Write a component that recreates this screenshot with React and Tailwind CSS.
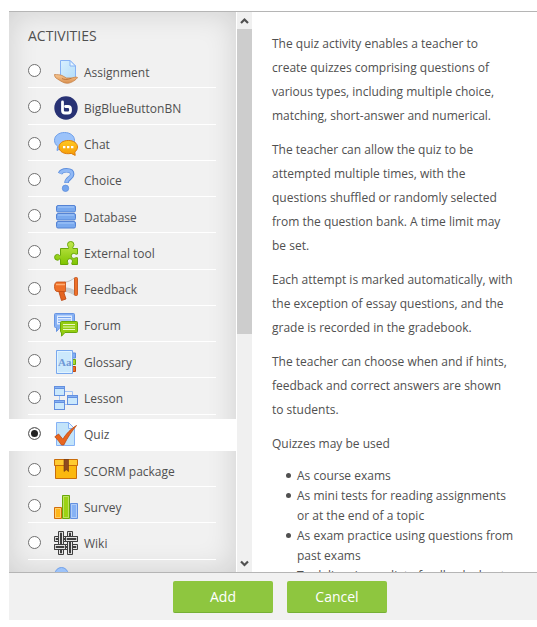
import { useState } from 'react';

const Svg = ({ children }) => (
  <svg width="24" height="24" viewBox="0 0 24 24" aria-hidden="true" className="shrink-0">
    {children}
  </svg>
);

const AssignmentIcon = () => (
  <Svg>
    <defs>
      <linearGradient id="paper" x1="0" y1="0" x2="1" y2="1">
        <stop offset="0" stopColor="#d8f0ff" />
        <stop offset="1" stopColor="#b4ddf8" />
      </linearGradient>
      <linearGradient id="hand" x1="0" y1="0" x2="0" y2="1">
        <stop offset="0" stopColor="#f8c894" />
        <stop offset="1" stopColor="#d98f4e" />
      </linearGradient>
    </defs>
    <path d="M6.5 .5h9.500l5.500 5.500v12.500h-15z" fill="url(#paper)" stroke="#86b2f5" />
    <path d="M16 .5v5.500h5.500z" fill="#e8f6ff" stroke="#86b2f5" />
    <path d="M.5 14.500c2 .3 5.500 0 7.500 1l4.500 2.500h5c2-.3 4.500-1.500 6-.5-1 2-6 5.500-10 5.800-4 0-7-2.500-10-4.300-2-1-3-2.500-3-4.500z" fill="url(#hand)" stroke="#c68146" strokeWidth=".8" />
    <path d="M8 18.500c2 1.200 5 1.500 9.500-.3" fill="none" stroke="#b97339" strokeWidth=".9" />
  </Svg>
);

const BigBlueButtonIcon = () => (
  <Svg>
    <circle cx="12" cy="12" r="11.700" fill="#283274" />
    <path d="M8.500 6v8.500a2.500 2.500 0 0 0 2.500 2.500h3a2.500 2.500 0 0 0 2.500-2.500v-1.500a2.500 2.500 0 0 0-2.500-2.500h-2.500" fill="none" stroke="#fff" strokeWidth="2.800" strokeLinecap="round" strokeLinejoin="round" />
  </Svg>
);

const ChatIcon = () => (
  <Svg>
    <defs>
      <linearGradient id="orange" x1="0" y1="0" x2="0" y2="1">
        <stop offset="0" stopColor="#ffc922" />
        <stop offset="1" stopColor="#f59a07" />
      </linearGradient>
    </defs>
    <path d="M10.500.5c5.800 0 10 3.300 10 7.800s-4 8-10 8c-1 0-2-.1-3-.3L3 18.500l.7-4.200C1.700 12.800.5 10.700.5 8.300.5 3.800 4.700.5 10.500.5z" fill="#9cc3fa" stroke="#6f9fe9" />
    <path d="M14.500 8.500c5 0 9 2.700 9 6.500 0 2-1 3.700-2.700 4.900l.4 3.500-4-2c-7 1.300-12.200-1.700-12.200-6.400 0-3.800 4-6.500 9.500-6.500z" fill="url(#orange)" stroke="#dd7d0b" />
    <path d="M9 14h2.400v2.200H9zM13 14h2.400v2.200H13zM17 14h2.400v2.200H17z" fill="#fff" />
  </Svg>
);

const ChoiceIcon = () => (
  <Svg>
    <path d="M6 5.600C7.200 3 9.500 2.300 12.500 2.300c3.500 0 5.700 1.300 5.700 4 0 4-5.700 3.800-5.700 8.700" fill="none" stroke="#5d8edd" strokeWidth="4.500" />
    <path d="M6.200 5.500C7.500 3 9.500 2.500 12.500 2.500c3.200 0 5.500 1.200 5.500 3.700 0 3.600-5.500 3.800-5.500 8.400" fill="none" stroke="#91b9f5" strokeWidth="2.800" />
    <circle cx="11.500" cy="20.300" r="3.200" fill="#74a5ee" stroke="#5d8edd" strokeWidth=".8" />
  </Svg>
);

const DatabaseIcon = () => (
  <Svg>
    {[0.5, 8.5, 16.5].map((y) => (
      <g key={y}>
        <rect x="2.500" y={y} width="19" height="6.500" rx="1.500" fill="#79a9ee" stroke="#5583d4" />
        <path d={`M4 ${y + 1.5}h16`} stroke="#a9cbfb" />
      </g>
    ))}
  </Svg>
);

const PuzzleIcon = () => (
  <Svg>
    <defs>
      <linearGradient id="green" x1="0" y1="0" x2="0" y2="1">
        <stop offset="0" stopColor="#c3e84f" />
        <stop offset="1" stopColor="#7fc400" />
      </linearGradient>
    </defs>
    <path d="M6.500 7.500H14.500c.8-1.200-1-2-1-4a3.200 3 0 0 1 6.400 0c0 2-1.800 2.800-1 4h4.600v5.500c-1.500.8-2.300-.6-3.800-.6a2.500 2.500 0 0 0 0 5c1.500 0 2.300-1.400 3.800-.6v6.700h-5.500c-.8-1.500.5-2 .5-3.500a2.600 2.300 0 0 0-5.200 0c0 1.500 1.300 2 .5 3.500H6.500v-5.300c-1.200-.7-1.500 1-3 1a2.900 2.900 0 0 1 0-5.800c1.500 0 1.800 1.700 3 1z" fill="url(#green)" stroke="#69a70a" />
  </Svg>
);

const FeedbackIcon = () => (
  <Svg>
    <path d="M4.500 13.500h6.500l-1 2.500 2 6-4.500 1.500z" fill="#e56420" stroke="#b94410" strokeWidth=".8" />
    <path d="M10 5.300C14.500 5 18 3 20.500.8v17.400c-2.500-2-6-3.900-10.500-3.900z" fill="#f2f2f2" stroke="#b3b3b3" strokeWidth=".8" />
    <path d="M12 10.500c3.500 0 6 1 8 2.500v4.500c-2.500-2-5-3-8-3.500z" fill="#c9c9c9" />
    <path d="M3 5h8.500v9.500H3C1.300 14.500.5 12 .5 9.700S1.300 5 3 5z" fill="#ee7029" stroke="#c14b12" strokeWidth=".8" />
    <path d="M2 7.500h9" stroke="#ffad73" strokeWidth="1.500" />
    <rect x="20.500" y=".5" width="3" height="18" rx="1" fill="#ee7029" stroke="#c14b12" strokeWidth=".8" />
  </Svg>
);

const ForumIcon = () => (
  <Svg>
    <path d="M1.500.5h18a1 1 0 0 1 1 1v12a1 1 0 0 1-1 1H6L2.500 18.500v-4h-1a1 1 0 0 1-1-1v-12a1 1 0 0 1 1-1z" fill="#86b0f3" stroke="#6794e2" />
    <path d="M3 2.500h15v9H3z" fill="#dfecff" />
    <path d="M4 4.500h13M4 7h13M4 9.500h13" stroke="#76a3ec" />
    <path d="M7.500 8.500h15a1 1 0 0 1 1 1v9a1 1 0 0 1-1 1H11L7.500 23.200v-3.700h0a1 1 0 0 1-1-1v-9a1 1 0 0 1 1-1z" fill="#93cc11" stroke="#69a70a" />
    <path d="M9 11.500h12M9 14h12M9 16.500h12" stroke="#e9f9bd" strokeWidth="1.200" />
  </Svg>
);

const GlossaryIcon = () => (
  <Svg>
    <path d="M18 3h3.500v5H18z" fill="#82b0f4" stroke="#5f8ede" />
    <path d="M18 9.500h3.500v5H18z" fill="#a9d92e" stroke="#69a70a" />
    <path d="M18 16.500h3.500v5H18z" fill="#ed6c24" stroke="#bd4911" />
    <path d="M2.500.5h16v23h-16z" fill="#cbe8fc" stroke="#79a8ee" />
    <path d="M3.500 1.500h14v21h-14z" fill="none" stroke="#e2f4ff" />
    <text x="4" y="16" fontSize="11" fontWeight="bold" fill="#6e98d5" fontFamily="Liberation Serif, serif">Aa</text>
  </Svg>
);

const LessonIcon = () => (
  <Svg>
    <path d="M11 5.500h7.500V9M5.500 10v4.500M11 18.500h7.500V17" fill="none" stroke="#a3c3f5" />
    {[[0.5, 0.5], [13.5, 9.5], [0.5, 14.5]].map(([x, y]) => (
      <g key={`${x}-${y}`}>
        <rect x={x} y={y} width="10" height="9" fill="#cbe8fc" stroke="#6490df" />
        <rect x={x} y={y} width="10" height="2" fill="#86b2f5" stroke="#6490df" />
      </g>
    ))}
  </Svg>
);

const QuizIcon = () => (
  <Svg>
    <path d="M2.500.5h12l6 6v17h-18z" fill="#c3e4fa" stroke="#86b2f5" />
    <path d="M14.500.5v6h6z" fill="#e8f6ff" stroke="#86b2f5" />
    <path d="M.8 14.800 4.600 12l4.200 5.200C12 12 17 6.500 22.500 3.500 18 9 13.500 15.500 9.800 23H7.500C5.500 20 3.500 17.500.8 14.800z" fill="#e9661f" stroke="#bd4911" strokeWidth=".8" />
  </Svg>
);

const ScormIcon = () => (
  <Svg>
    <path d="M1.500 6.500h21v13h-21z" fill="#fbb80f" stroke="#c96d0b" />
    <path d="M.5.500h23v6H.5z" fill="#ffcb31" stroke="#c96d0b" />
    <path d="M10 .5h4.500v12l-2.200-1.800-2.300 1.800z" fill="#8f4a1f" stroke="#6d3513" strokeWidth=".6" />
  </Svg>
);

const SurveyIcon = () => (
  <Svg>
    <path d="M.5 12.500h7v11h-7z" fill="#ffb61a" stroke="#d26c0b" />
    <path d="M8.500.5h7v23h-7z" fill="#9cd313" stroke="#69a70a" />
    <path d="M16.500 8.500h7v15h-7z" fill="#86b2f5" stroke="#6490df" />
    <path d="M1.500 13.500h5v9h-5zM9.500 1.500h5v21h-5zM17.500 9.500h5v13h-5z" fill="none" stroke="#fff" strokeOpacity=".35" />
  </Svg>
);

const WikiIcon = () => (
  <Svg>
    {/* horizontal straps, then vertical ones, then the two crossings that go back on top */}
    <g stroke="#3f3f3f">
      <path d="M.5 5.500h23v5H.5zM.5 13.500h23v5H.5z" fill="#e4e4e4" />
      <path d="M2 7.500h20v1H2zM2 15.500h20v1H2z" fill="#555" />
      <path d="M4.500.5h5v23h-5zM13.500.5h5v23h-5z" fill="#e4e4e4" />
      <path d="M6.500 2h1v20h-1zM15.500 2h1v20h-1z" fill="#555" />
      <path d="M11.500 5.500h12v5h-12zM.5 13.500h11v5H.5z" fill="#e4e4e4" />
      <path d="M13 7.500h9v1h-9zM2 15.500h8v1H2z" fill="#555" />
    </g>
  </Svg>
);

const WorkshopIcon = () => (
  <Svg>
    <circle cx="7.500" cy="7" r="6.500" fill="#9cc3fa" stroke="#6f9fe9" />
  </Svg>
);

const ACTIVITIES = [
  { id: 'assign', label: 'Assignment', Icon: AssignmentIcon },
  { id: 'bbb', label: 'BigBlueButtonBN', Icon: BigBlueButtonIcon },
  { id: 'chat', label: 'Chat', Icon: ChatIcon },
  { id: 'choice', label: 'Choice', Icon: ChoiceIcon },
  { id: 'data', label: 'Database', Icon: DatabaseIcon },
  { id: 'lti', label: 'External tool', Icon: PuzzleIcon },
  { id: 'feedback', label: 'Feedback', Icon: FeedbackIcon },
  { id: 'forum', label: 'Forum', Icon: ForumIcon },
  { id: 'glossary', label: 'Glossary', Icon: GlossaryIcon },
  { id: 'lesson', label: 'Lesson', Icon: LessonIcon },
  { id: 'quiz', label: 'Quiz', Icon: QuizIcon },
  { id: 'scorm', label: 'SCORM package', Icon: ScormIcon },
  { id: 'survey', label: 'Survey', Icon: SurveyIcon },
  { id: 'wiki', label: 'Wiki', Icon: WikiIcon },
  { id: 'workshop', label: '', Icon: WorkshopIcon },
];

const PARAGRAPHS = [
  'The quiz activity enables a teacher to create quizzes comprising questions of various types, including multiple choice, matching, short-answer and numerical.',
  'The teacher can allow the quiz to be attempted multiple times, with the questions shuffled or randomly selected from the question bank. A time limit may be set.',
  'Each attempt is marked automatically, with the exception of essay questions, and the grade is recorded in the gradebook.',
  'The teacher can choose when and if hints, feedback and correct answers are shown to students.',
  'Quizzes may be used',
];

const USES = [
  'As course exams',
  'As mini tests for reading assignments or at the end of a topic',
  'As exam practice using questions from past exams',
  'To deliver immediate feedback about',
];

function ActivityRow({ id, label, Icon, checked, onSelect }) {
  return (
    <label
      htmlFor={id}
      className={`flex items-center pl-[19px] pr-5 ${checked ? 'bg-white' : ''}`}
    >
      <span
        className={`flex h-full flex-1 items-center border-b ${
          checked ? 'border-transparent' : 'border-white'
        }`}
      >
        <input
          type="radio"
          id={id}
          name="activity"
          checked={checked}
          onChange={() => onSelect(id)}
          className="mb-0.5 size-[13px] shrink-0 appearance-none rounded-full border border-[#707070] bg-white checked:bg-[#222] checked:shadow-[inset_0_0_0_2px_#fff]"
        />
        <span className="ml-[13px] mr-1.5">
          <Icon />
        </span>
        <span className="mt-0.5">{label}</span>
      </span>
    </label>
  );
}

function Scrollbar() {
  return (
    <div aria-hidden="true" className="flex w-4 shrink-0 flex-col border-l border-white bg-[#f0f0f0]">
      <svg viewBox="0 0 15 17" className="h-[17px] w-full shrink-0">
        <path d="M4 11l3.500-3.500L11 11" fill="none" stroke="#505050" strokeWidth="2.200" />
      </svg>
      <div className="min-h-0 flex-1">
        <div className="h-[58%] bg-[#cdcdcd]" />
      </div>
      <svg viewBox="0 0 15 17" className="h-[17px] w-full shrink-0">
        <path d="M4 6.500l3.500 3.500L11 6.500" fill="none" stroke="#505050" strokeWidth="2.200" />
      </svg>
    </div>
  );
}

export default function App() {
  const [selected, setSelected] = useState('quiz');

  return (
    <form
      onSubmit={(e) => e.preventDefault()}
      className="flex h-screen flex-col bg-white pt-[11px] pb-[7px] pl-[9px] font-['Open_Sans',sans-serif] text-xs text-[#505050]"
    >
      <div className="flex min-h-0 flex-1 border-y border-[#b5b5b5]">
        {/* activity list */}
        <div className="w-[227px] shrink-0 overflow-hidden bg-[#f1f1f1] shadow-[inset_0_0_30px_rgba(0,0,0,0.14)]">
          <h2 className="pt-3.5 pb-2.5 pl-[19px] text-sm leading-5">ACTIVITIES</h2>
          <div className="grid h-[540px] auto-rows-fr gap-1">
            {ACTIVITIES.map((activity) => (
              <ActivityRow
                key={activity.id}
                {...activity}
                checked={selected === activity.id}
                onSelect={setSelected}
              />
            ))}
          </div>
        </div>
        <Scrollbar />

        {/* description */}
        <div className="flex-1 overflow-hidden pt-5 pr-[22px] pl-5">
          {PARAGRAPHS.map((text) => (
            <p key={text} className="mb-2.5 leading-6">{text}</p>
          ))}
          <ul className="ml-3.5 leading-5">
            {USES.map((text) => (
              <li
                key={text}
                className="flex gap-1.5 before:mt-[7px] before:size-[5px] before:shrink-0 before:rounded-full before:bg-[#505050]"
              >
                {text}
              </li>
            ))}
          </ul>
        </div>
      </div>

      <div className="flex shrink-0 justify-center gap-3.5 bg-[#f1f1f1] pt-2 pb-[7px] pl-3.5">
        <button
          type="submit"
          className="h-8 w-[100px] rounded-xs border-b border-[#76b035] bg-[#8ec63f] text-sm text-white"
        >
          Add
        </button>
        <button
          type="button"
          className="h-8 w-[100px] rounded-xs border-b border-[#76b035] bg-[#8ec63f] text-sm text-white"
        >
          Cancel
        </button>
      </div>
    </form>
  );
}
